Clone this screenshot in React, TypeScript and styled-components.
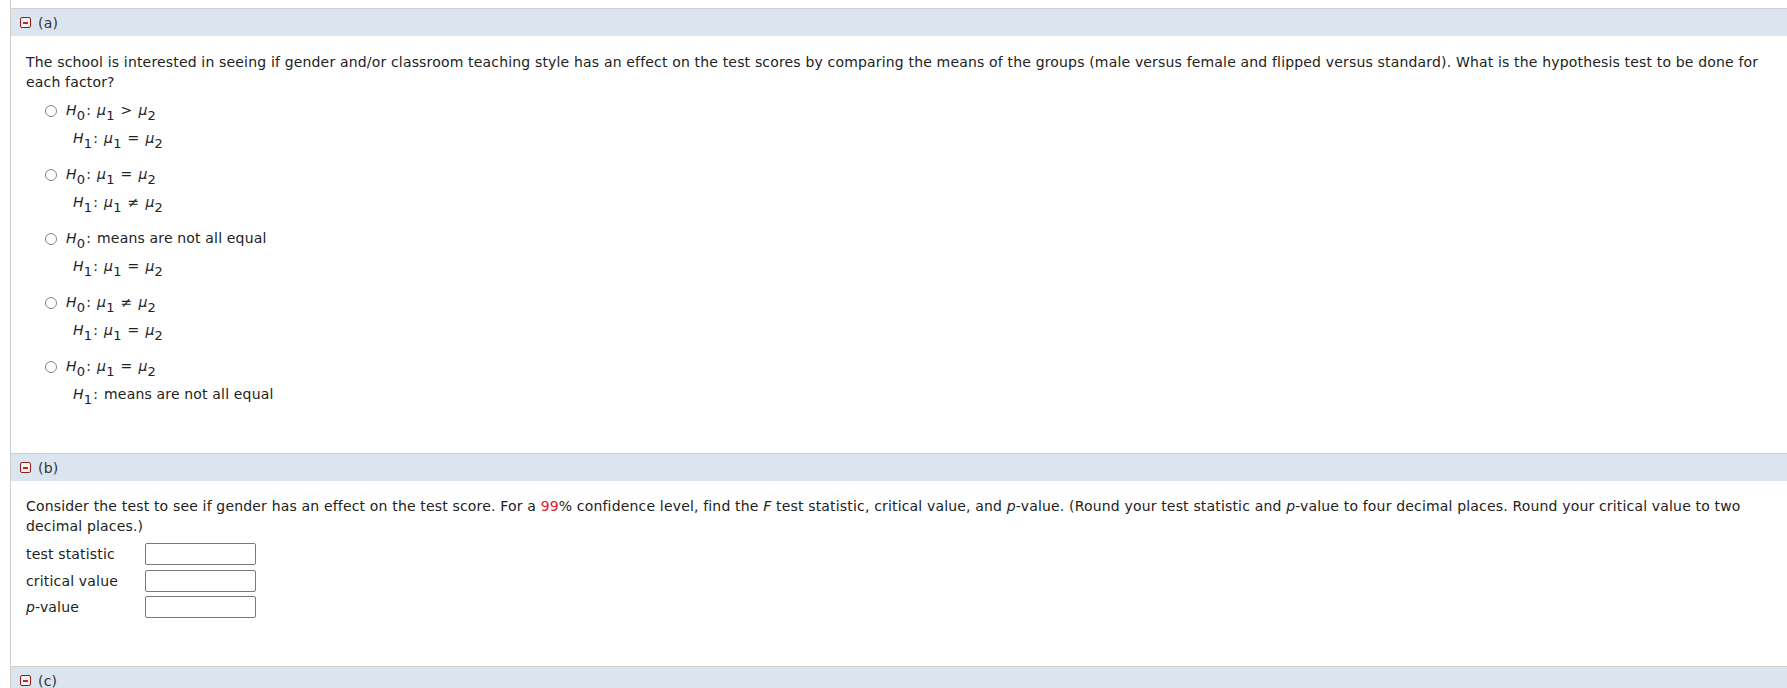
import React from "react";
import styled, { createGlobalStyle } from "styled-components";

const Global = createGlobalStyle`
  html, body { margin: 0; padding: 0; background: #fff; }
  body {
    font-family: "DejaVu Sans", Verdana, sans-serif;
    font-size: 14px;
    letter-spacing: 0.17px;
    color: #222;
  }
`;

const Page = styled.div`
  margin-left: 10px;
  padding-top: 8px;
  border-left: 1px solid #cfcfcf;
  min-height: 680px;
`;

const Section = styled.section``;

const Header = styled.div`
  display: flex;
  align-items: center;
  gap: 7px;
  height: 27px;
  padding-left: 9px;
  border-top: 1px solid #cfcfcf;
  background: #dae5ef;
  color: #333;
`;

const Toggle = styled.span`
  box-sizing: border-box;
  width: 11px;
  height: 11px;
  border: 1px solid #8f1d1d;
  border-radius: 2px;
  background: #fbeeee;
  display: inline-flex;
  align-items: center;
  justify-content: center;
  &::after {
    content: "";
    width: 5px;
    height: 2px;
    background: #b03030;
  }
`;

const Body = styled.div<{ $pad: string }>`
  padding: ${(p) => p.$pad};
  line-height: 20px;
`;

const Para = styled.p`
  margin: 0;
  padding-right: 14px;
`;

const Options = styled.div`
  margin-top: 6px;
  padding-left: 19px;
  display: flex;
  flex-direction: column;
  gap: 8px;
`;

const Option = styled.label`
  display: grid;
  grid-template-columns: 12px auto;
  column-gap: 9px;
  align-items: start;
`;

const Radio = styled.span`
  box-sizing: border-box;
  width: 12px;
  height: 12px;
  margin-top: 7px;
  border: 1px solid #858585;
  border-radius: 50%;
  background: #fff;
`;

const Lines = styled.div`
  display: flex;
  flex-direction: column;
`;

const MathLine = styled.div<{ $indent?: boolean }>`
  height: 28px;
  line-height: 24px;
  padding-left: ${(p) => (p.$indent ? "7px" : "0")};
  white-space: nowrap;
`;

const I = styled.i`
  font-style: italic;
`;

const Sub = styled.sub`
  font-size: 13px;
  vertical-align: -5px;
  line-height: 0;
`;

const Colon = styled.span`
  margin-left: 1px;
  margin-right: 6px;
`;

const Op = styled.span`
  display: inline-block;
  padding: 0 6px;
`;

const Red = styled.span`
  color: #e0202e;
`;

const Form = styled.div`
  margin-top: 7px;
  display: grid;
  grid-template-columns: 119px 111px;
  grid-auto-rows: 22px;
  row-gap: 4.5px;
  align-items: center;
`;

const Label = styled.span``;

const Input = styled.span`
  box-sizing: border-box;
  display: block;
  width: 111px;
  height: 22px;
  border: 1px solid #7a7a7a;
  border-radius: 2px;
  background: #fff;
`;

const H = ({ n }: { n: number }) => (
  <>
    <I>H</I>
    <Sub>{n}</Sub>
    <Colon>:</Colon>
  </>
);
const Mu = ({ n }: { n: number }) => (
  <>
    <I>μ</I>
    <Sub>{n}</Sub>
  </>
);

const rel = (op: string) => (
  <>
    <Mu n={1} />
    <Op>{op}</Op>
    <Mu n={2} />
  </>
);

const options: [React.ReactNode, React.ReactNode][] = [
  [rel(">"), rel("=")],
  [rel("="), rel("≠")],
  ["means are not all equal", rel("=")],
  [rel("≠"), rel("=")],
  [rel("="), "means are not all equal"],
];

export default function App() {
  return (
    <>
      <Global />
      <Page>
        <Section>
          <Header>
            <Toggle />
            <span>(a)</span>
          </Header>
          <Body $pad="16px 0 43px 15px">
            <Para>
              The school is interested in seeing if gender and/or classroom teaching style has an effect on the test
              scores by comparing the means of the groups (male versus female and flipped versus standard). What is the
              hypothesis test to be done for each factor?
            </Para>
            <Options>
              {options.map(([h0, h1], i) => (
                <Option key={i}>
                  <Radio />
                  <Lines>
                    <MathLine>
                      <H n={0} />
                      {h0}
                    </MathLine>
                    <MathLine $indent>
                      <H n={1} />
                      {h1}
                    </MathLine>
                  </Lines>
                </Option>
              ))}
            </Options>
          </Body>
        </Section>
        <Section>
          <Header>
            <Toggle />
            <span>(b)</span>
          </Header>
          <Body $pad="15px 0 48px 15px">
            <Para>
              Consider the test to see if gender has an effect on the test score. For a <Red>99</Red>% confidence level,
              find the <I>F</I> test statistic, critical value, and <I>p</I>-value. (Round your test statistic and{" "}
              <I>p</I>-value to four decimal places. Round your critical value to two decimal places.)
            </Para>
            <Form>
              <Label>test statistic</Label>
              <Input />
              <Label>critical value</Label>
              <Input />
              <Label>
                <I>p</I>-value
              </Label>
              <Input />
            </Form>
          </Body>
        </Section>
        <Section>
          <Header>
            <Toggle />
            <span>(c)</span>
          </Header>
        </Section>
      </Page>
    </>
  );
}
